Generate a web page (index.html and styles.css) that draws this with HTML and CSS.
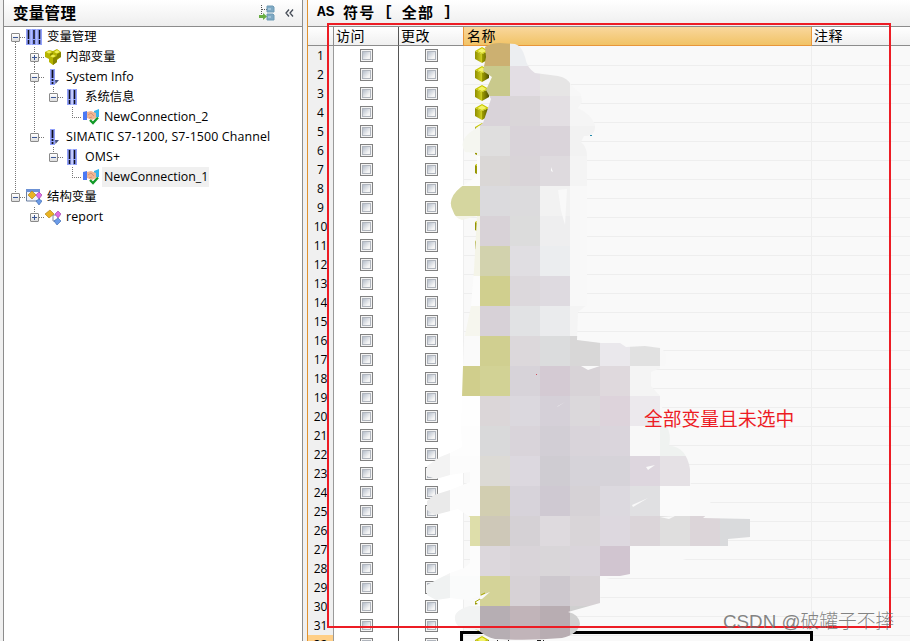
FILE: index.html
```html
<!DOCTYPE html>
<html lang="zh-CN">
<head>
  <meta charset="UTF-8" />
  <title>变量管理</title>
  <link rel="stylesheet" href="styles.css">
</head>
<body>
  <svg class="defs" width="0" height="0">
    <defs>
      <linearGradient id="cubeLeft" x1="0" y1="0" x2="1" y2="0"><stop offset="0" stop-color="#8f8e00"/><stop offset="1" stop-color="#cfcf20"/></linearGradient>
      <linearGradient id="cubeRight" x1="0" y1="0" x2="1" y2="0"><stop offset="0" stop-color="#a09f00"/><stop offset="1" stop-color="#505000"/></linearGradient>
      <symbol id="cube" viewBox="0 0 14 16">
        <path d="M0 4L7 7V16L0 12Z" fill="url(#cubeLeft)"/>
        <path d="M14 4L7 7V16L14 12Z" fill="url(#cubeRight)"/>
        <path d="M7 0L14 4L7 7L0 4Z" fill="#c8c800"/>
        <path d="M7 1.3L11.5 4L7 6L2.5 4Z" fill="#f3f36a"/>
      </symbol>
      <symbol id="cubes" viewBox="0 0 16 16">
        <path d="M0 3L4 1L8 2L12 0L16 3V8L12 11V13L8 16L4 13V10L0 8Z" fill="#b5b400"/>
        <path d="M1 3L4 1.5L7 3L4 4.5ZM9 3L12 1L15 3L12 4.5ZM5 7L8 5.5L11 7L8 8.5Z" fill="#eeee50"/>
        <path d="M8 9L12 7V13L8 16ZM12 5L16 3V8L12 10ZM5 5L8 3.5V5L5 7Z" fill="#858400"/>
      </symbol>
      <symbol id="bars3" viewBox="0 0 16 16">
        <path d="M0 0H16V16H0Z" fill="#91a0fa"/>
        <path d="M2.5 1V10M2.5 11V15M8 1V10M8 11V15M13.5 1V10M13.5 11V15" stroke="#10101c" stroke-width="1.5"/>
        <path d="M5.2 0V16M10.8 0V16" stroke="#c3cbff"/>
      </symbol>
      <symbol id="bars2" viewBox="0 0 16 16">
        <path d="M3 0H7.6V16H3ZM8.5 0H13V16H8.5Z" fill="#91a0fa"/>
        <path d="M5.5 1V10M5.5 11V15M10.5 1V10M10.5 11V15" stroke="#10101c" stroke-width="1.5"/>
      </symbol>
      <symbol id="bar1" viewBox="0 0 16 16">
        <path d="M5 0H10V16H5Z" fill="#91a0fa"/>
        <path d="M7.5 1V9M7.5 10V12M7.5 13V15" stroke="#10101c" stroke-width="1.7"/>
        <path d="M10 11H14L10.5 15Z" fill="#47517c"/>
      </symbol>
      <symbol id="link" viewBox="0 0 16 16">
        <path d="M0 3L4 2V11H0Z" fill="#4c79f4"/>
        <path d="M11 2L16 0V8H11Z" fill="#35b5ee"/>
        <path d="M4 3L8 2L13 4V9L9 11L4 9Z" fill="#f0b695"/>
        <path d="M5 6L8 4L11 7M6 9L9 8" stroke="#d08c6c" stroke-width=".8" fill="none"/>
        <path d="M7 11L10 14L15 8.5" stroke="#129a28" stroke-width="2.3" fill="none"/>
      </symbol>
      <symbol id="nodes" viewBox="0 0 16 16">
        <path d="M8 6H11M8 6V12H12" stroke="#7c8aa6" fill="none"/>
        <path d="M0 5L5 1L9 5L4 9Z" fill="#e9b322" stroke="#a87a12" stroke-width=".6"/>
        <path d="M10 5L13 2L16 5L13 9Z" fill="#e06be4" stroke="#9b3aa3" stroke-width=".6"/>
        <path d="M9 12L13 9L16 12L12 16Z" fill="#6b9be8" stroke="#3361ac" stroke-width=".6"/>
      </symbol>
      <symbol id="struct" viewBox="0 0 16 16">
        <path d="M.5 .5H13.5V12H.5Z" fill="#eef2fb" stroke="#6a7f9f"/>
        <path d="M0 0H14V3H0Z" fill="#6c91d4"/>
        <path d="M2 6L6 2L10 6L6 10Z" fill="#e9b322" stroke="#a87a12" stroke-width=".6"/>
        <path d="M10 6L13 3L16 6L13 10Z" fill="#e06be4" stroke="#9b3aa3" stroke-width=".6"/>
        <path d="M10 12L13 10L16 12L13 16Z" fill="#6b9be8" stroke="#3361ac" stroke-width=".6"/>
      </symbol>
    </defs>
  </svg>

  <div class="app">
    <div class="sidebar">
      <div class="panel-head">
        <span class="panel-title">变量管理</span>
        <svg class="sync" width="16" height="17" viewBox="0 0 16 17">
          <path d="M2.5 0V11M3 4.5H8" stroke="#555" stroke-dasharray="1 1" fill="none"/>
          <path d="M8 1H14L15 2V7H8ZM8 9H14L15 10V15H8Z" fill="#7fa9c4" stroke="#6f9bb5"/>
          <path d="M9 4H12M9 12H12" stroke="#c6deeb"/>
          <path d="M0 10H4V8L8 11.500L4 15V13H0Z" fill="#68ae43"/>
        </svg>
        <svg class="collapse" width="9" height="8" viewBox="0 0 9 8"><path d="M4 .5L1 4L4 7.500M8 .5L5 4L8 7.500" stroke="#444a55" stroke-width="1.300" fill="none"/></svg>
      </div>
      <div class="tree" id="tree"></div>
    </div>

    <div class="main">
      <div class="panel-head main-head"><span class="lat">AS </span>符号<span class="lat"> [ </span>全部<span class="lat"> ]</span></div>
      <div class="grid-row grid-head">
        <div class="num"></div><div class="access">访问</div><div class="change">更改</div><div class="name">名称</div><div class="note">注释</div>
      </div>
      <div id="rows"></div>
    </div>
  </div>

  <div class="cell-focus"></div>
  <svg class="mosaic" width="910" height="641" viewBox="0 0 910 641">
    <clipPath id="smear">
      <path d="M485 47Q491 43 500 43L515 44Q522 46 525 57Q527 68 535 73L558 76Q568 78 571 85L581 94L582 102L578 108Q592 115 595 125Q596 136 584 136L581 142Q587 147 587 156V305L578 312L577 340L601 343L620 343L626 347L645 346L660 348Q669 352 665 366L651 372V386L660 396L665 422Q672 434 669 446Q686 446 690 469V483L710 497L711 511L703 518L750 519L750 537L728 539V546L690 558L630 574L620 576L601 580L600 603L568 612Q579 614 580 624Q578 634 562 638Q530 641 495 639Q486 637 478 630L461 628Q454 624 455 616Q457 608 478 604L474 601L450 598L436 600L427 595L427 585L440 578L450 573L464 568L470 563V517L458 509L435 515L427 510L427 501L434 495L450 490L470 482V472L450 475L436 479L427 476L427 466L440 457L450 453L462 447L461 428L463 366L464 340L471 306L474 270L477 216L462 220Q455 218 453 211Q446 199 461 187L477 176V153L465 152Q459 143 468 134L483 123L491 99L486 90L492 77L483 71L486 57Z"/>
    </clipPath>
    <g id="blocks" clip-path="url(#smear)"></g>
    <g class="scratches">
      <path d="M558 190L567 189L565 225L561 211ZM581 366H600L588 370ZM557 407L565 402L558 406ZM646 467L655 465L648 470ZM632 505L648 498L633 507ZM660 517L675 516L669 519ZM472 599L490 592L482 599ZM551 167L553 172L551 171Z"/>
    </g>
    <path d="M475 602L480 599M481 595L485 593" stroke="#a8a700"/>
    <path d="M590 135.500H592" stroke="#258bad"/>
    <path d="M536 374.500H537" stroke="#d05060"/>
    <path d="M497 640.500H498M508 640.500H509M537 640.500H541M543 640.500H544" stroke="#222"/>
  </svg>
  <div class="red-box"></div>
  <div class="red-note">全部变量且未选中</div>
  <div class="watermark">CSDN @破罐子不摔</div>

  <script>
    // guides: v = line, b = blank, c = corner, +/- = expander; u / d tell where the line goes
    const items = [
      ['-d', 'bars3', '变量管理'],
      ['v +ud', 'cubes', '内部变量'],
      ['v -ud', 'bar1', 'System Info'],
      ['v v -u', 'bars2', '系统信息'],
      ['v v b c', 'link', 'NewConnection_2'],
      ['v -u', 'bar1', 'SIMATIC S7-1200, S7-1500 Channel', 'wide'],
      ['v b -u', 'bars2', 'OMS+', 'wide'],
      ['v b b c', 'link', 'NewConnection_1', 'selected'],
      ['-u', 'struct', '结构变量'],
      ['b +u', 'nodes', 'report', 'wide']
    ];
    document.getElementById('tree').innerHTML = items.map(item => {
      const guides = item[0].split(' ').map(g => {
        const type = { v: 'line', b: '', c: 'corner', '+': 'exp plus', '-': 'exp' }[g[0]];
        const up = g.includes('u') ? ' up' : '';
        const down = g.includes('d') ? ' down' : '';
        return `<i class="guide ${type}${up}${down}"></i>`;
      }).join('');
      return `<div class="node">${guides}<svg class="icon" width="16" height="16"><use href="#${item[1]}"/></svg><span class="label ${item[3] || ''}">${item[2]}</span></div>`;
    }).join('');

    let rows = '';
    for (let i = 1; i <= 32; i++) {
      rows += `<div class="grid-row${i === 32 ? ' current' : ''}"><div class="num">${i}</div><div class="access"><b class="check"></b></div><div class="change"><b class="check"></b></div><div class="name"><svg width="14" height="16"><use href="#cube"/></svg></div><div class="note"></div></div>`;
    }
    document.getElementById('rows').innerHTML = rows;

    // one line per 30px band, first colour is the column at x = 450
    const bands = [
      'ccb071 ccb071 eceef1 eceef1',
      'c9c98c c9c98c e3dee4 e6e5e5 f7f7f7',
      'd9d3d9 d9d3d9 dad6d9 e3dfe3 f5f5f5',
      'f5f6f0 dfdede d9d3d9 dad4da f2f2f2',
      'fcfcfc dad7d6 d9d4d8 dedade f4f4f4',
      'd5d69f dbdadd dcdbdd f2f2f2 f8f8f8',
      'f4f4e8 d8d2d7 dcdcdc eeeeef f8f8f8',
      'f4f4e8 d2d2ad e0dee2 ebedef f8f8f8',
      'fcfcfc d0cf8e dcd8dc dedae0 f8f8f8',
      'f6f6ee d7d1d7 e1e2e4 eaebed f4f4f4',
      'fafafa d0cf90 dcd8db dbdcdd d8d7d7 eae8ec e1e1e1 f8f8f8',
      'd0ce8c d2d295 d7d3d9 d4cad3 d8d3d7 dfd9dd f4f4f4',
      'fefefe dbd6d8 dbd8de d5d0d8 dbd8db ddd3db ece9ed f9f9f9',
      'fdfdfd d9d9da d9d4da d2ced5 d9d4da dad5dc f8f8f8 eff2f0',
      'fcfcfc dcdad5 dcd8df cfccd2 d6d3d9 d6d3d9 ddd6de e5e1e5 f9f9f9',
      'fcfcfc d2ceb1 d7d3da cfc9d2 d6d2d6 dcd9df e0e0e2 fafafa f9f9f9',
      'dedeaa cec8b8 d5d1d5 dedade d9d5d8 ddd8df dbd5d9 dfdede dcd5d9 d9dadc f9f9f9',
      'fcfcfc dcd7dc d9d4d9 d9d6d9 dad5db d1c5d0 f9f9f9 f9f9f9 f9f9f9',
      'fafbfb d4d398 d7d2d6 cdc8ce d6d1d4 f9f9f9',
      'f2f3f3 b6aeb3 c1b4b9 b8adb2 d0d0d0',
      'f2f3f3 b6aeb3 c1b4b9 b8adb2 d0d0d0'
    ];
    const tips = { 14: 'f3f3f3', 15: 'eaeaea', 18: 'f0f2f2' };
    let blocks = '';
    bands.forEach((band, r) => {
      const y = 36 + r * 30;
      band.split(' ').forEach((color, c) => {
        blocks += `<rect x="${450 + c * 30}" y="${y}" width="30" height="30" fill="#${color}"/>`;
      });
      blocks += `<rect x="420" y="${y}" width="30" height="30" fill="#${tips[r] || 'f3f3f3'}"/>`;
    });
    document.getElementById('blocks').innerHTML = blocks;
  </script>
</body>
</html>
```
FILE: styles.css
```css
:root {
  --line: #8c8c8c;
  --soft-line: #eeeeee;
  --red: #ed1c24;
  --cjk: "Noto Sans CJK SC", sans-serif;
}

*,
*::before {
  box-sizing: border-box;
}

body {
  margin: 0;
  width: 910px;
  height: 641px;
  overflow: hidden;
  position: relative;
  background: #f0f0f0;
  font-family: "Open Sans", var(--cjk);
  color: #000;
}

.defs {
  position: absolute;
}

.app {
  display: flex;
  height: 641px;
  overflow: hidden;
  padding-left: 3px;
}

.sidebar {
  width: 300px;
  flex: none;
  background: #fff;
  border-left: 1px solid var(--line);
  border-right: 1px solid var(--line);
}

.panel-head {
  display: flex;
  align-items: center;
  height: 27px;
  border-bottom: 1px solid var(--line);
  background: linear-gradient(#fff, #eeeeee);
  font: bold 15px/24px var(--cjk);
  white-space: pre;
}

.panel-title {
  margin-left: 9px;
  padding-bottom: 2px;
  font-size: 15.5px;
  letter-spacing: .3px;
  flex: 1;
}

.sync {
  margin-right: 10px;
}

.collapse {
  margin-right: 8px;
}

/* tree */
.node {
  display: flex;
  align-items: center;
  height: 20px;
  padding-left: 2px;
}

.guide {
  width: 19px;
  height: 20px;
  flex: none;
  position: relative;
  --dots: repeating-linear-gradient(#777 0 1px, transparent 1px 2px);
  --hdots: repeating-linear-gradient(90deg, #777 0 1px, transparent 1px 2px);
  background-repeat: no-repeat;
}

.guide.line {
  background-image: var(--dots);
  background-size: 1px 20px;
  background-position: 9px 0;
}

.guide.corner {
  background-image: var(--dots), var(--hdots);
  background-size: 1px 10px, 10px 1px;
  background-position: 9px 0, 9px 10px;
}

.guide.exp {
  background-image: var(--hdots);
  background-size: 5px 1px;
  background-position: 14px 10px;
}

.guide.up {
  background-image: var(--hdots), var(--dots);
  background-size: 5px 1px, 1px 6px;
  background-position: 14px 10px, 9px 0;
}

.guide.down {
  background-image: var(--hdots), var(--dots);
  background-size: 5px 1px, 1px 6px;
  background-position: 14px 10px, 9px 15px;
}

.guide.up.down {
  background-image: var(--hdots), var(--dots), var(--dots);
  background-size: 5px 1px, 1px 6px, 1px 6px;
  background-position: 14px 10px, 9px 0, 9px 15px;
}

.exp::before {
  content: "";
  position: absolute;
  left: 5px;
  top: 6px;
  width: 9px;
  height: 9px;
  border: 1px solid #8a8a8a;
  border-radius: 1px;
  background: linear-gradient(#3b5795, #3b5795) center / 5px 1px no-repeat, linear-gradient(#fff, #dedede);
}

.exp.plus::before {
  background: linear-gradient(#3b5795, #3b5795) center / 5px 1px no-repeat, linear-gradient(#3b5795, #3b5795) center / 1px 5px no-repeat, linear-gradient(#fff, #dedede);
}

.icon {
  margin-left: 1px;
  flex: none;
}

.label {
  margin-left: 3px;
  padding: 0 1px 0 2px;
  height: 20px;
  font-size: 12.4px;
  line-height: 20px;
  white-space: nowrap;
}

.label.wide {
  letter-spacing: .13px;
}

.label.selected {
  background: #f0f0f0;
}

/* variable grid */
.main {
  flex: 1;
  margin-left: 4px;
  border-left: 1px solid #e0922f;
  background: #f9f9f9;
  min-width: 0;
}

.main-head {
  padding: 0 0 2px 9px;
  letter-spacing: 1.4px;
}

.lat {
  font: bold 14.4px/24px "Liberation Mono", monospace;
  letter-spacing: 0;
}

.grid-row {
  display: grid;
  grid-template-columns: 26px 65px 65px 348px 1fr;
  height: 19px;
}

.grid-row > div {
  border-right: 1px solid var(--soft-line);
  border-bottom: 1px solid var(--soft-line);
}

.grid-row > .note {
  border-right: none;
}

.grid-row .num {
  background: #f0f0f0;
  border-color: #9a9a9a;
  font: 12px/19px "Open Sans", sans-serif;
  text-align: center;
}

.access,
.change {
  display: flex;
  justify-content: center;
  padding-top: 3px;
  background: #fff;
}

.grid-row .access {
  border-right-color: #555;
}

.grid-row .name {
  padding: 1px 0 0 11px;
  line-height: 0;
}

.grid-row.current .num {
  background: #ffcf87;
}

.grid-head > div,
.grid-head .num {
  justify-content: flex-start;
  border-color: var(--line);
  background: linear-gradient(#fff, #efefef);
  font: 14px/16px var(--cjk);
  letter-spacing: .5px;
  padding: 0 0 0 2px;
}

.grid-head .access,
.grid-head .change,
.grid-head .note {
  background: linear-gradient(#fff, #f0f0f0);
}

.grid-head .change {
  border-right-color: #e8963a;
}

.grid-head .name {
  padding: 0 0 0 3px;
  line-height: 16px;
  background: linear-gradient(#f9d79d, #f1c366);
  border-color: #e8963a;
}

.check {
  width: 13px;
  height: 13px;
  border: 1px solid #818181;
  background: linear-gradient(135deg, #b5becb, #f5f5f5 75%) center / 7px 7px no-repeat, linear-gradient(#b0b5bd, #b0b5bd) center / 9px 9px no-repeat, #f4f4f4;
}

/* annotations over the grid */
.cell-focus {
  position: absolute;
  left: 460px;
  top: 631px;
  width: 353px;
  height: 24px;
  border: 3px solid #000;
}

.mosaic {
  position: absolute;
  left: 0;
  top: 0;
}

.scratches {
  fill: #f9f9f9;
}

.red-box {
  position: absolute;
  left: 327px;
  top: 23px;
  width: 564px;
  height: 605px;
  border: 2px solid var(--red);
}

.red-note {
  position: absolute;
  left: 644px;
  top: 404px;
  color: var(--red);
  font: 18.8px/28px var(--cjk);
  white-space: nowrap;
}

.watermark {
  position: absolute;
  left: 723px;
  top: 608px;
  color: rgba(110, 110, 110, .85);
  font: 300 18.8px/28px "Liberation Sans", var(--cjk);
  white-space: nowrap;
}
```
